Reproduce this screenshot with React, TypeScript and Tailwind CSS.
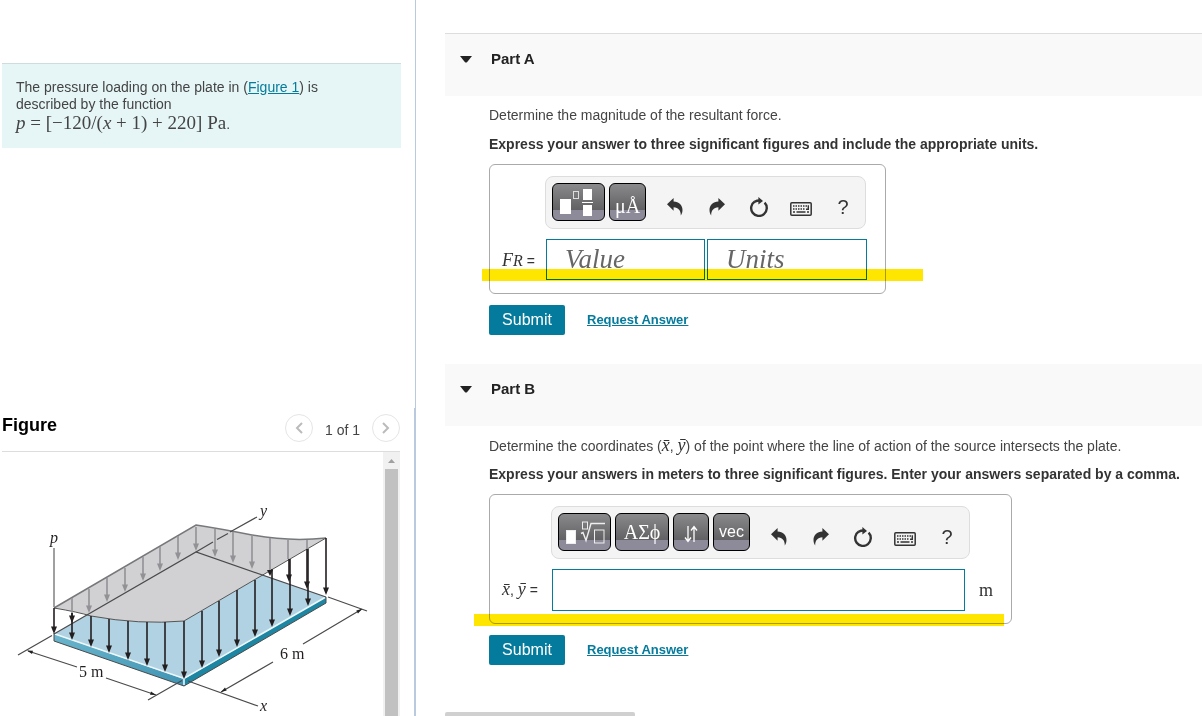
import React from 'react';

const SERIF = "font-['Liberation_Serif',serif]";

interface Arrow {
    x: number;
    from: number;
    to: number;
    tone?: string;
}

// Load arrows, back edges first so that the front ones overlap them
const backArrows: Arrow[] = [
    { x: 89, from: 589, to: 613 },
    { x: 107, from: 578, to: 602 },
    { x: 125, from: 568, to: 592 },
    { x: 143, from: 557, to: 581 },
    { x: 160, from: 547, to: 571 },
    { x: 178, from: 536, to: 560 },
    { x: 196, from: 527, to: 551 },
    { x: 215, from: 529, to: 557 },
    { x: 233, from: 532, to: 563 },
    { x: 252, from: 535, to: 569 },
];

const frontArrows: Arrow[] = [
    { x: 54, from: 608, to: 634 },
    { x: 72, from: 613, to: 623 },
    { x: 72, from: 613, to: 640 },
    { x: 91, from: 616, to: 647 },
    { x: 109, from: 619, to: 653 },
    { x: 128, from: 621, to: 660 },
    { x: 147, from: 622, to: 666 },
    { x: 165, from: 622, to: 672 },
    { x: 184, from: 621, to: 679 },
    { x: 202, from: 611, to: 668 },
    { x: 219, from: 601, to: 657 },
    { x: 237, from: 590, to: 647 },
    { x: 255, from: 580, to: 637 },
    { x: 272, from: 569, to: 627 },
    { x: 289, from: 559, to: 582 },
    { x: 290, from: 559, to: 616 },
    { x: 307, from: 549, to: 589 },
    { x: 308, from: 549, to: 606 },
    { x: 326, from: 538, to: 595 },
];

const LoadArrow = ({ x, from, to, tone = '#231f20' }: Arrow) => (
    <g>
        <path d={`M${x} ${from}V${to - 5}`} stroke={tone} strokeWidth="1.6" />
        <path d={`M${x - 3} ${to - 7.5}h6L${x} ${to}z`} fill={tone} />
    </g>
);

const PlateFigure = () => (
    <svg viewBox="2 452 381 264" className="h-[264px] w-[381px] shrink-0" fill="none" role="img" aria-label="Pressure loading on a 5 m by 6 m plate">
        <defs>
            <linearGradient id="side" x1="0" y1="0" x2="1" y2="1">
                <stop offset="0" stopColor="#6bb5cd" />
                <stop offset="1" stopColor="#3f94b3" />
            </linearGradient>
        </defs>

        {/* plate */}
        <path d="M54 634 196 552 326 597 184 679z" fill="#b1d2e2" />
        <path d="M54 634 184 679V686L54 641z" fill="url(#side)" />
        <path d="M184 679 326 597V603L184 686z" fill="#1d86a3" />
        <path d="M54 641 184 686 326 603V597" stroke="#4a4a4a" strokeWidth="1" />
        <path d="M54 633V641" stroke="#4a4a4a" strokeWidth="1" />
        <path d="M55 634 184 678.500 325 597.500M184 679V685" stroke="#eef7fa" strokeWidth="1.600" />

        {/* load surface */}
        <path d="M54 608Q78 612 91 616Q140 625 184 621L326 538Q290 542 252 535Q222 529 196 525z" fill="#d1d1d3" />
        <path d="M54 608 196 525Q222 529 252 535Q290 542 326 538" stroke="#77787b" strokeWidth="1.500" />
        <path d="M54 608Q78 612 91 616Q140 625 184 621L326 538" stroke="#555" strokeWidth="1" />
        <path d="M54 634 196 552 326 597" stroke="#4a4a4c" strokeWidth="1.200" />

        {/* axes */}
        <path d="M196 552 213 542M217 539.500 228 533.500M230 532 257 517" stroke="#4a4a4c" strokeWidth="1.200" />
        <path d="M188 681 258 706" stroke="#4a4a4c" strokeWidth="1.200" />
        <path d="M54 548V607" stroke="#808083" strokeWidth="1.500" />

        {backArrows.map((a) => (
            <LoadArrow key={`b${a.x}`} {...a} tone="#929296" />
        ))}
        <path d="M72 598V613M270 538V570M288 540V559M307 540V549" stroke="#929296" strokeWidth="1.600" />
        <path d="M267 570H273L270 576z" fill="#231f20" />
        {frontArrows.map((a) => (
            <LoadArrow key={`f${a.x}-${a.to}`} {...a} />
        ))}

        {/* dimensions */}
        <g stroke="#4a4a4c" strokeWidth="1.200">
            <path d="M18 655 52 635.500M148 700 182 680.500M28 651 77 667M106 678 156 695" />
            <path d="M328 597 367 611M362 609 303 644M273 662 221 692" />
        </g>
        <g fill="#231f20">
            <path d="M27 650.500 33 650.800 32 654z" />
            <path d="M156 695 150 694.700 151 691.500z" />
            <path d="M362 609 358 613.500 356.300 610.600z" />
            <path d="M221 692 225 687.500 226.700 690.400z" />
        </g>

        <g fill="#231f20" fontSize="16" fontFamily="Liberation Serif, serif">
            <text x="50" y="543" fontStyle="italic">p</text>
            <text x="260" y="516" fontStyle="italic">y</text>
            <text x="260" y="711" fontStyle="italic">x</text>
            <text x="79" y="677">5 m</text>
            <text x="280" y="659">6 m</text>
        </g>
    </svg>
);

const UndoIcon = ({ flip = false }: { flip?: boolean }) => (
    <svg viewBox="0 0 16 18" className={flip ? 'h-[18px] w-4 -scale-x-100' : 'h-[18px] w-4'} fill="#333">
        <path d="M0 6.200 6.600 0V3.400C12 3.800 15.500 7 15.500 12C15.500 14.300 14.900 16 13.800 17.600C14 12.500 11.500 9.600 6.600 9.200V12.800z" />
    </svg>
);

const ResetIcon = () => (
    <svg viewBox="0 0 20 20" className="size-5" fill="none">
        <path d="M5.800 4.500A7.800 7.800 0 1 0 15.600 5.700" stroke="#333" strokeWidth="2.400" />
        <path d="M5.600 4.700Q8 3.500 10.500 3.500" stroke="#333" strokeWidth="2.400" />
        <path d="M9.400 0 14 4 9.400 7.600z" fill="#333" />
    </svg>
);

const KeyboardIcon = () => (
    <svg viewBox="0 0 22 14" className="h-3.5 w-[22px]" fill="none" stroke="#333">
        <rect x=".8" y=".8" width="20.400" height="12.400" rx="1" strokeWidth="1.500" />
        <path d="M3 4H17M3 7H15" strokeWidth="1.500" strokeDasharray="1.500 1" />
        <path d="M18.300 3.300V7.200H16M3 10H5M6.500 10H15.500M17 10H19" strokeWidth="1.400" />
    </svg>
);

const EditTools = () => {
    const tool = 'flex h-9 w-[42px] items-center justify-center text-[#333]';
    return (
        <div className="ml-1 flex items-center pt-2.5">
            <button className={tool} aria-label="Undo"><UndoIcon /></button>
            <button className={tool} aria-label="Redo"><UndoIcon flip /></button>
            <button className={tool} aria-label="Reset"><ResetIcon /></button>
            <button className={`${tool} pt-1`} aria-label="Keyboard shortcuts"><KeyboardIcon /></button>
            <button className={`${tool} text-xl`} aria-label="Help">?</button>
        </div>
    );
};

const MathButton = ({ label, className, children }: { label: string; className: string; children: React.ReactNode }) => (
    <button
        aria-label={label}
        className={`flex h-[38px] items-center justify-center rounded-md border border-black bg-[linear-gradient(to_bottom,#8a8a8d_0%,#616163_72%,#8d8b99_73%,#8d8b99_100%)] text-white ${className}`}
    >
        {children}
    </button>
);

const Toolbar = ({ children }: { children: React.ReactNode }) => (
    <div className="flex h-[53px] w-fit items-center gap-1 rounded-lg border border-[#ddd] bg-[#f4f4f4] pr-px pb-0.5 pl-1.5">
        {children}
        <EditTools />
    </div>
);

const PartHeader = ({ title, className = '' }: { title: string; className?: string }) => (
    <div className={`flex items-start bg-[#f9f9f9] pl-[15px] ${className}`}>
        <button className="flex items-center pt-4 text-[#222]" aria-expanded="true">
            <svg viewBox="0 0 12 7" className="h-[7px] w-3" fill="#222">
                <path d="M0 0H12L7 6.200Q6 7 5 6.200z" />
            </svg>
            <span className="ml-[19px] text-[15px] leading-[18px] font-bold">{title}</span>
        </button>
    </div>
);

const SubmitRow = () => (
    <div className="mt-[11px] flex items-center gap-[22px]">
        <button className="h-[30px] w-[76px] rounded-xs bg-[#047b9c] text-base text-white">Submit</button>
        <a href="#request" className="text-[13px] font-bold text-[#047b9c] underline">Request Answer</a>
    </div>
);

const Highlight = ({ className }: { className: string }) => (
    <div className={`pointer-events-none absolute h-3 bg-[#ffe600] mix-blend-multiply ${className}`} />
);

const MeanSymbol = ({ children }: { children: React.ReactNode }) => (
    <i className={`text-lg leading-4 text-[#333] ${SERIF}`}>{children}</i>
);

const PartA = () => (
    <section>
        <PartHeader title="Part A" className="h-[63px] border-t border-[#ddd]" />
        <div className="pl-11">
            <p className="mt-[11px] text-sm leading-4 text-[#444]">Determine the magnitude of the resultant force.</p>
            <p className="mt-[13px] text-sm leading-4 font-bold text-[#333]">
                Express your answer to three significant figures and include the appropriate units.
            </p>
            <div className="relative mt-3 w-fit rounded-md border border-[#aaa] bg-white pt-[11px] pr-[18px] pb-[13px]">
                <div className="pl-[55px]">
                    <Toolbar>
                        <MathButton label="Templates" className="w-[53px] pr-1">
                            <svg viewBox="0 0 34 30" className="h-[30px] w-[34px]" fill="#fff">
                                <rect x="0" y="12" width="11" height="15" />
                                <rect x="13.500" y="4.500" width="5" height="7" fill="none" stroke="#ddd" />
                                <rect x="23" y="2" width="9" height="11" />
                                <path d="M22 15.500H33" stroke="#fff" strokeWidth="1" />
                                <rect x="23" y="18" width="9" height="11" />
                            </svg>
                        </MathButton>
                        <MathButton label="Units and symbols" className={`w-[37px] pt-2 text-xl ${SERIF}`}>μÅ</MathButton>
                    </Toolbar>
                </div>
                <div className="mt-2.5 flex items-center pl-3">
                    <label htmlFor="force" className="w-11 text-sm text-[#333]">
                        <span className={`text-lg italic ${SERIF}`}>F</span>
                        <span className={`text-base italic ${SERIF}`}>R</span> =
                    </label>
                    <input id="force" placeholder="Value" className={`h-[41px] w-[159px] border border-[#047b9c] px-[18px] text-[27px] italic placeholder:text-[#666] ${SERIF}`} />
                    <input aria-label="Units" placeholder="Units" className={`ml-0.5 h-[41px] w-40 border border-[#047b9c] px-[18px] text-[27px] italic placeholder:text-[#666] ${SERIF}`} />
                </div>
                <Highlight className="bottom-3 -left-2 w-[441px]" />
            </div>
            <SubmitRow />
        </div>
    </section>
);

const PartB = () => (
    <section className="mt-[29px]">
        <PartHeader title="Part B" className="h-[62px]" />
        <div className="pl-11">
            <p className="mt-[11px] text-sm leading-4 text-[#444]">
                Determine the coordinates (<MeanSymbol>x̄</MeanSymbol>, <MeanSymbol>ȳ</MeanSymbol>) of the point where the line of action of the source intersects the plate.
            </p>
            <p className="mt-3 text-sm leading-4 font-bold whitespace-nowrap text-[#333]">
                Express your answers in meters to three significant figures. Enter your answers separated by a comma.
            </p>
            <div className="relative mt-3 w-fit rounded-md border border-[#aaa] bg-white pt-[11px] pr-[18px] pb-3">
                <div className="pl-[61px]">
                    <Toolbar>
                        <MathButton label="Templates" className="w-[53px]">
                            <svg viewBox="0 0 40 26" className="h-[26px] w-10" fill="none" stroke="#eee">
                                <rect x="1.500" y="11.500" width="9" height="13" fill="#fff" />
                                <rect x="17.500" y="3" width="5" height="7" />
                                <path d="M16 14.500 18 13.500 21 21.500 26 4.500H40" strokeWidth="1.400" />
                                <rect x="29.500" y="11" width="9.500" height="13" />
                            </svg>
                        </MathButton>
                        <MathButton label="Greek letters" className={`w-[54px] text-xl ${SERIF}`}>ΑΣϕ</MathButton>
                        <MathButton label="Arrows" className="w-9 pt-1">
                            <svg viewBox="0 0 14 18" className="h-[18px] w-3.5" fill="none" stroke="#fff" strokeWidth="1.300">
                                <path d="M4 1V16M1 12.500 4 16.500 7 12.500M10 17V2M7 5.500 10 1.500 13 5.500" />
                            </svg>
                        </MathButton>
                        <MathButton label="Vectors" className="w-[37px] text-base">vec</MathButton>
                    </Toolbar>
                </div>
                <div className="mt-2.5 flex items-center pl-3">
                    <label htmlFor="coords" className="w-[50px] text-sm text-[#333]">
                        <MeanSymbol>x̄</MeanSymbol>, <MeanSymbol>ȳ</MeanSymbol> =
                    </label>
                    <input id="coords" className={`h-[42px] w-[413px] border border-[#047b9c] px-[18px] text-[27px] italic ${SERIF}`} />
                    <span className={`ml-3.5 w-3.5 text-lg text-[#333] ${SERIF}`}>m</span>
                </div>
                <Highlight className="-bottom-[3px] -left-4 w-[530px]" />
            </div>
            <SubmitRow />
        </div>
    </section>
);

export default function App() {
    return (
        <div className="flex h-screen overflow-hidden bg-white font-['Liberation_Sans',Arial,sans-serif]">
            <aside className="flex w-[416px] shrink-0 flex-col">
                <div className="h-[408px] shrink-0 border-r border-[#b9cadf] pt-[63px] pr-3.5 pl-0.5">
                    <div className="h-[85px] border-t border-[#cfdcdc] bg-[#e6f6f6] px-3.5 pt-[15px] text-sm leading-[17px] text-[#444]">
                        <p>
                            The pressure loading on the plate in (<a href="#figure" className="text-[#047b9c] underline">Figure 1</a>) is
                            <br />
                            described by the function
                        </p>
                        <p className="leading-5">
                            <span className={`text-[19px] leading-5 ${SERIF}`}>
                                <i>p</i> = [−120/(<i>x</i> + 1) + 220] Pa
                            </span>.
                        </p>
                    </div>
                </div>
                <div className="flex grow flex-col border-r-2 border-[#b9cadf] pr-3.5 pl-0.5">
                    <div className="flex h-11 shrink-0 items-center justify-between border-b border-[#ddd]">
                        <h2 className="pb-2.5 text-lg font-bold text-black">Figure</h2>
                        <div className="flex items-center gap-3 text-sm text-[#444]">
                            <button aria-label="Previous figure" className="mb-1 flex size-7 items-center justify-center rounded-full border border-[#e5e5e5]">
                                <svg viewBox="0 0 8 12" className="h-3 w-2" fill="none" stroke="#bbb" strokeWidth="2"><path d="M7 1 2 6 7 11" /></svg>
                            </button>
                            <span>1 of 1</span>
                            <button aria-label="Next figure" className="mb-1 flex size-7 items-center justify-center rounded-full border border-[#e5e5e5]">
                                <svg viewBox="0 0 8 12" className="h-3 w-2" fill="none" stroke="#bbb" strokeWidth="2"><path d="M1 1 6 6 1 11" /></svg>
                            </button>
                        </div>
                    </div>
                    <div id="figure" className="flex grow justify-between overflow-hidden">
                        <PlateFigure />
                        <div className="flex w-[17px] flex-col items-center bg-[#f1f1f1] pt-[7px]">
                            <svg viewBox="0 0 7 4" className="h-1 w-[7px]" fill="#a0a0a0"><path d="M0 4 3.500 0 7 4z" /></svg>
                            <div className="mt-1.5 w-[13px] grow bg-[#c1c1c1]" />
                        </div>
                    </div>
                </div>
            </aside>
            <main className="min-w-0 grow pt-[33px] pl-[29px]">
                <PartA />
                <PartB />
                <button aria-label="Provide feedback" className="mt-[47px] block h-9 w-[190px] rounded-xs bg-[#d0d0d0]" />
            </main>
        </div>
    );
}
